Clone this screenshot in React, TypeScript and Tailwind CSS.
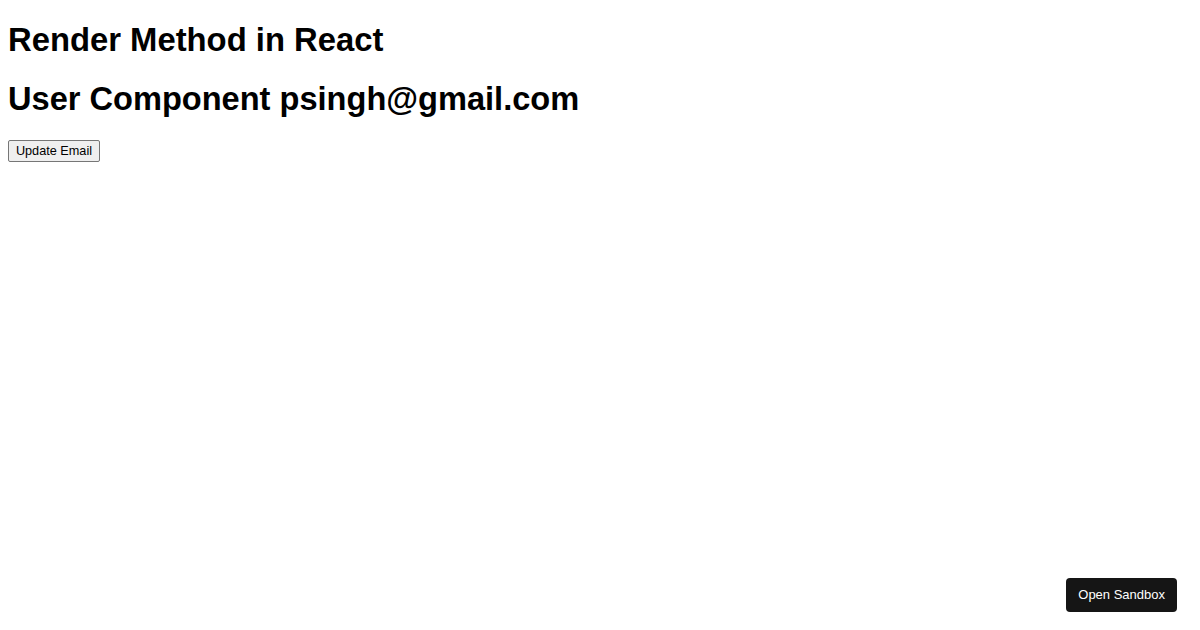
import React, { useState } from 'react';

const User: React.FC<{ email: string }> = ({ email }) => (
    <h1 className="text-[32.6px] font-bold leading-[37px] mt-[21.44px] mb-[23.44px]">User Component {email}</h1>
);

const App: React.FC = () => {
    const [email, setEmail] = useState('psingh@gmail.com');

    return (
        <div className="min-h-screen bg-white text-black px-2 pt-px font-['Liberation_Sans',Arial,sans-serif]">
            <h1 className="text-[32.8px] font-bold leading-[37px] mt-[20.44px] mb-[21.44px]">Render Method in React</h1>
            <User email={email} />
            <button
                onClick={() => setEmail('new@gmail.com')}
                className="block h-[22px] w-[92px] text-[12.7px] leading-[16px] px-[6px] bg-[#efefef] border border-[#767676] rounded-[2px] hover:bg-[#e5e5e5]"
            >
                Update Email
            </button>
            <button className="fixed right-[23px] bottom-[18px] h-[34px] px-3 rounded-[4px] bg-[#151515] text-white text-[13px]">
                Open Sandbox
            </button>
        </div>
    );
};

export default App;
